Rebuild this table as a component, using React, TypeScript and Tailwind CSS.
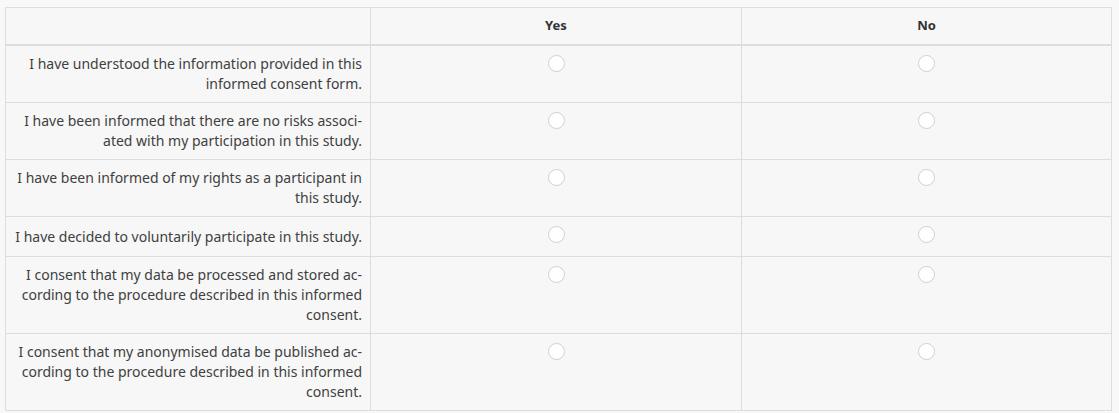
import React from "react";

const rows: string[][] = [
  ["I have understood the information provided in this", "informed consent form."],
  ["I have been informed that there are no risks associ-", "ated with my participation in this study."],
  ["I have been informed of my rights as a participant in", "this study."],
  ["I have decided to voluntarily participate in this study."],
  [
    "I consent that my data be processed and stored ac-",
    "cording to the procedure described in this informed",
    "consent.",
  ],
  [
    "I consent that my anonymised data be published ac-",
    "cording to the procedure described in this informed",
    "consent.",
  ],
];

function Radio() {
  return (
    <div className="mx-auto h-[17px] w-[17px] rounded-full border border-[#cfcfcf] bg-white" />
  );
}

export default function App() {
  return (
    <div
      className="min-h-[413px] w-full bg-[#f8f8f8] pl-[5px] pt-[7px]"
      style={{ fontFamily: '"Noto Sans", "Open Sans", sans-serif' }}
    >
      <div className="w-[1107px] border border-[#dddddd] bg-[#f7f7f7]">
        <div className="flex h-[38px] border-b-2 border-[#dddddd]">
          <div className="w-[365px] border-r border-[#dddddd]" />
          <div className="flex w-[371px] items-center justify-center border-r border-[#dddddd] text-[13px] font-bold text-[#333333]">
            Yes
          </div>
          <div className="flex flex-1 items-center justify-center text-[13px] font-bold text-[#333333]">
            No
          </div>
        </div>
        {rows.map((lines, i) => (
          <div
            key={i}
            className={`flex ${i < rows.length - 1 ? "border-b border-[#dddddd]" : ""}`}
          >
            <div className="flex w-[365px] items-center justify-end border-r border-[#dddddd] py-[8px] pr-[8px] text-right text-[14px] leading-[20px] text-[#404040]">
              <div>
                {lines.map((l, j) => (
                  <div key={j} className="whitespace-nowrap">
                    {l}
                  </div>
                ))}
              </div>
            </div>
            <div className="w-[371px] border-r border-[#dddddd] pb-[13px] pt-[9px]">
              <Radio />
            </div>
            <div className="flex-1 pb-[13px] pt-[9px]">
              <Radio />
            </div>
          </div>
        ))}
      </div>
    </div>
  );
}
